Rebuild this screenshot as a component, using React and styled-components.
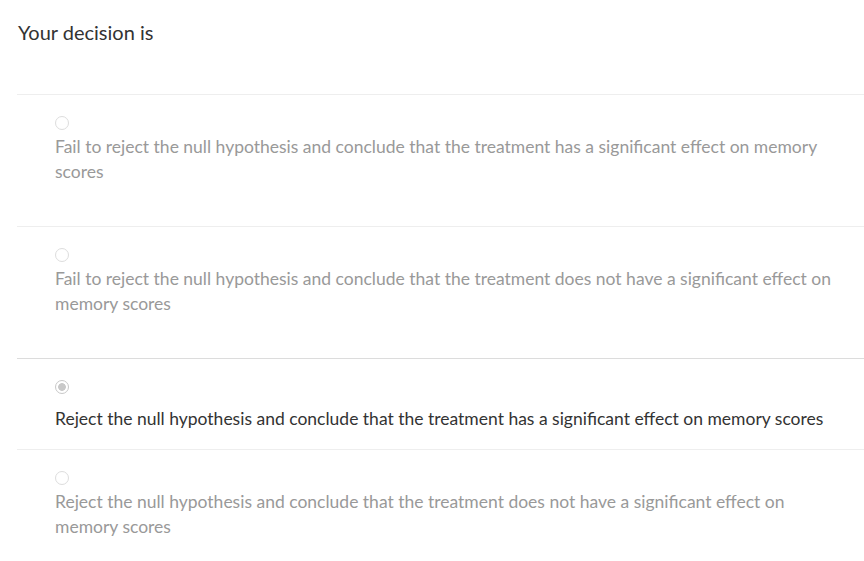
import React from "react";
import styled, { createGlobalStyle } from "styled-components";

const Global = createGlobalStyle`
  html, body { margin: 0; padding: 0; background: #fff; }
  body { font-family: Lato, "Open Sans", sans-serif; overflow: hidden; }
`;

const Page = styled.div`
  width: 864px;
  height: 561px;
  padding-left: 17px;
  box-sizing: border-box;
  overflow: hidden;
`;

const Title = styled.h2`
  margin: 0;
  padding: 19px 0 0 1px;
  height: 94px;
  box-sizing: border-box;
  font-size: 20px;
  line-height: 26px;
  font-weight: 400;
  color: #333;
`;

const List = styled.div`
  width: 900px;
`;

const Option = styled.label`
  display: block;
  box-sizing: border-box;
  border-top: 1px solid ${(p) => (p.$selected ? "#dcdcdc" : "#eee")};
  padding: 21px 0 0 38px;
  min-height: ${(p) => p.$height}px;
  cursor: pointer;
`;

const Radio = styled.span`
  display: block;
  width: 14px;
  height: 14px;
  box-sizing: border-box;
  border-radius: 50%;
  border: 1px solid ${(p) => (p.$checked ? "#c8c8c8" : "#ddd")};
  background: ${(p) => (p.$checked ? "radial-gradient(circle, #c8c8c8 0 3.5px, #fff 4.2px)" : "#fff")};
  margin-bottom: ${(p) => (p.$checked ? 12 : 4)}px;
`;

const Text = styled.div`
  font-size: 17.5px;
  line-height: 25px;
  color: ${(p) => (p.$selected ? "#333" : "#999")};
  max-width: 785px;
`;

const options = [
  { text: "Fail to reject the null hypothesis and conclude that the treatment has a significant effect on memory scores", h: 132 },
  { text: "Fail to reject the null hypothesis and conclude that the treatment does not have a significant effect on memory scores", h: 132 },
  { text: "Reject the null hypothesis and conclude that the treatment has a significant effect on memory scores", h: 91, selected: true },
  { text: "Reject the null hypothesis and conclude that the treatment does not have a significant effect on memory scores", h: 132 },
];

export default function App() {
  return (
    <>
      <Global />
      <Page>
        <Title>Your decision is</Title>
        <List>
          {options.map((o, i) => (
            <Option key={i} $selected={o.selected} $height={o.h}>
              <Radio $checked={o.selected} />
              <Text $selected={o.selected}>{o.text}</Text>
            </Option>
          ))}
        </List>
      </Page>
    </>
  );
}
